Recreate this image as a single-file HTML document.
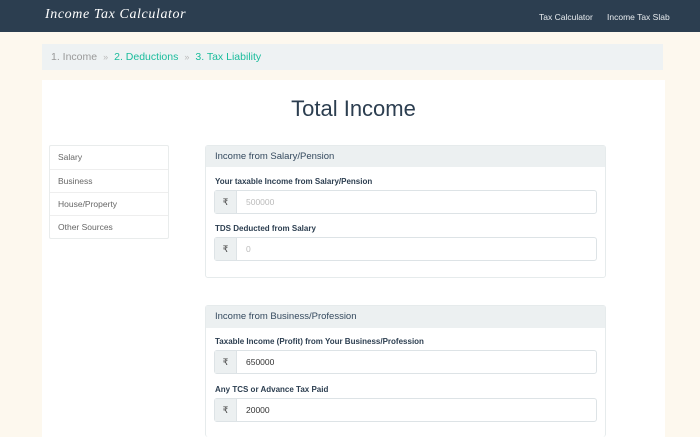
<!DOCTYPE html>
<html><head><style>
*{box-sizing:border-box;margin:0;padding:0}
html,body{width:700px;height:437px;overflow:hidden}
body{background:#fdf8ee;font-family:"Liberation Sans",sans-serif;position:relative}
.a{position:absolute}
.nav{left:0;top:0;width:700px;height:32px;background:#2c3e50}
.logo{left:45px;top:7px;color:#fff;font-family:"Liberation Serif",serif;font-style:italic;font-weight:normal;font-size:14px;letter-spacing:.6px}
.nl{top:12px;color:#e8ecef;font-size:8.5px}
.bc{left:42px;top:44px;width:621px;height:26px;background:#eef2f3;font-size:10.5px;padding:7px 9px;color:#999}
.bc span.g{color:#1abc9c}
.bc .s{color:#bbb;margin:0 6px;font-size:9px}
.card{left:42px;top:80px;width:623px;height:357px;background:#fff}
.title{left:42px;top:96px;width:623px;text-align:center;font-size:22px;color:#2c3e50}
.list{left:49px;top:145px;width:120px;border:1px solid #e9ecec;border-radius:2px}
.list div{height:23px;border-top:1px solid #eee;font-size:8.5px;color:#666;padding:6px 8px}
.list div:first-child{border-top:none}
.panel{left:205px;width:401px;border:1px solid #e6ebec;border-radius:3px;background:#fff}
.ph{height:21px;background:#ecf0f1;font-size:9.5px;color:#34495e;padding:5px 9px}
.lab{position:absolute;left:9px;font-size:8px;font-weight:bold;color:#2c3e50}
.inp{position:absolute;left:8px;width:383px;height:24px;border:1px solid #dde3e6;border-radius:3px;display:flex}
.inp .ad{width:22px;background:#ecf0f1;border-right:1px solid #dde3e6;font-size:9px;color:#444;text-align:center;line-height:22px}
.inp .v{padding-left:9px;font-size:8.5px;line-height:22px;color:#333}
.inp .v.p{color:#bbb}
</style></head><body>
<div class="a nav"></div>
<div class="a logo">Income Tax Calculator</div>
<div class="a nl" style="left:539px">Tax Calculator</div>
<div class="a nl" style="left:607px">Income Tax Slab</div>
<div class="a bc">1. Income<span class="s">»</span><span class="g">2. Deductions</span><span class="s">»</span><span class="g">3. Tax Liability</span></div>
<div class="a card"></div>
<div class="a title">Total Income</div>
<div class="a list"><div>Salary</div><div>Business</div><div>House/Property</div><div>Other Sources</div></div>
<div class="a panel" style="top:145px;height:133px">
<div class="ph">Income from Salary/Pension</div>
<div class="lab" style="top:31px">Your taxable Income from Salary/Pension</div>
<div class="inp" style="top:44px"><div class="ad">₹</div><div class="v p">500000</div></div>
<div class="lab" style="top:78px">TDS Deducted from Salary</div>
<div class="inp" style="top:91px"><div class="ad">₹</div><div class="v p">0</div></div>
</div>
<div class="a panel" style="top:305px;height:132px;border-bottom:none">
<div class="ph" style="height:22px">Income from Business/Profession</div>
<div class="lab" style="top:31px">Taxable Income (Profit) from Your Business/Profession</div>
<div class="inp" style="top:44px"><div class="ad">₹</div><div class="v">650000</div></div>
<div class="lab" style="top:79px">Any TCS or Advance Tax Paid</div>
<div class="inp" style="top:92px"><div class="ad">₹</div><div class="v">20000</div></div>
</div>
</body></html>
